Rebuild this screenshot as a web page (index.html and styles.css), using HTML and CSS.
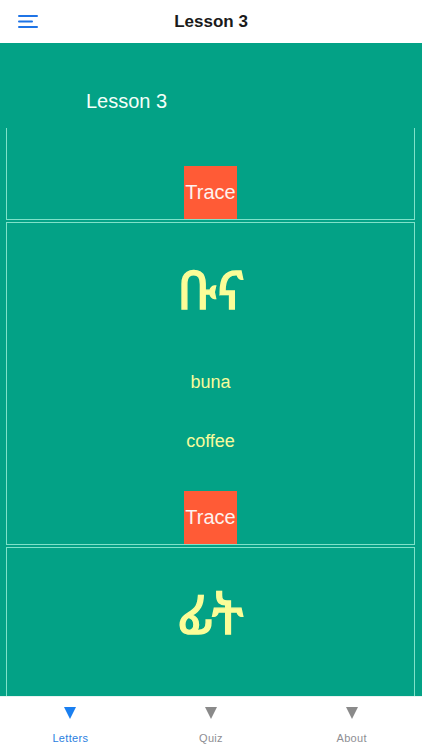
FILE: index.html
```html
<!DOCTYPE html>
<html lang="en">
<head>
<meta charset="utf-8">
<title>Lesson 3</title>
<link rel="stylesheet" href="styles.css">
</head>
<body>
<div class="app">
  <header class="topbar">
    <svg class="menu" width="20" height="13" viewBox="0 0 20 13" aria-hidden="true">
      <rect x="0" y="0" width="20" height="2" rx="1" fill="#1f74e6"/>
      <rect x="0" y="5.5" width="15" height="2" rx="1" fill="#1f74e6"/>
      <rect x="0" y="11" width="20" height="2" rx="1" fill="#1f74e6"/>
    </svg>
    <h1 class="title">Lesson 3</h1>
  </header>
  <main class="content">
    <div class="lesson-head">Lesson 3</div>
    <div class="viewport">
      <div class="list">
        <section class="card card-partial">
          <button class="trace">Trace</button>
        </section>
        <section class="card">
          <div class="word">ቡና</div>
          <div class="translit">buna</div>
          <div class="meaning">coffee</div>
          <button class="trace">Trace</button>
        </section>
        <section class="card">
          <div class="word">ፊት</div>
        </section>
      </div>
    </div>
  </main>
  <nav class="tabbar">
    <div class="tab active"><span class="tri"></span><span class="label">Letters</span></div>
    <div class="tab"><span class="tri"></span><span class="label">Quiz</span></div>
    <div class="tab"><span class="tri"></span><span class="label">About</span></div>
  </nav>
</div>
</body>
</html>
```
FILE: styles.css
```css
* { box-sizing: border-box; }
html, body { margin: 0; padding: 0; }
body {
  font-family: "Liberation Sans", Arial, sans-serif;
  background: #ffffff;
}
.app {
  width: 422px;
  height: 750px;
  display: flex;
  flex-direction: column;
  overflow: hidden;
}
.topbar {
  height: 43px;
  flex: none;
  display: flex;
  align-items: center;
  justify-content: center;
  position: relative;
  background: #ffffff;
}
.menu {
  position: absolute;
  left: 18px;
  top: 15px;
}
.title {
  margin: 0;
  font-size: 17px;
  font-weight: 700;
  color: #1a1a1a;
  line-height: 20px;
}
.content {
  flex: 1;
  display: flex;
  flex-direction: column;
  background: #03a286;
  min-height: 0;
}
.lesson-head {
  height: 85px;
  flex: none;
  padding: 47px 0 0 86px;
  font-size: 20px;
  line-height: 22px;
  color: #f4fff9;
}
.viewport {
  flex: 1;
  overflow: hidden;
  padding: 0 7px 0 6px;
  min-height: 0;
}
.list {
  display: flex;
  flex-direction: column;
  gap: 2px;
}
.card {
  height: 323px;
  flex: none;
  border: 1px solid #7fe2c9;
  display: flex;
  flex-direction: column;
  align-items: center;
  padding-top: 35px;
}
.card-partial {
  height: 92px;
  border-top: none;
  padding-top: 0;
}
.word {
  font-family: "Noto Sans Ethiopic", "Abyssinica SIL", "Noto Serif Ethiopic", "DejaVu Sans", sans-serif;
  font-size: 53px;
  font-weight: 400;
  -webkit-text-stroke: 1.3px #fbfd98;
  line-height: 62px;
  height: 62px;
  color: #fbfd98;
}
.translit {
  margin-top: 51px;
  font-size: 18px;
  line-height: 22px;
  color: #f6fb9c;
}
.meaning {
  margin-top: 37px;
  font-size: 18px;
  line-height: 22px;
  color: #f6fb9c;
}
.trace {
  margin-top: auto;
  height: 53px;
  padding: 0;
  border: none;
  background: #ff5b36;
  color: #fdf2ee;
  font-family: "Liberation Sans", Arial, sans-serif;
  font-size: 20px;
  line-height: 53px;
  width: 53px;
  display: flex;
  align-items: center;
  justify-content: center;
  white-space: nowrap;
}
.tabbar {
  height: 54px;
  flex: none;
  display: grid;
  grid-template-columns: 1fr 1fr 1fr;
  background: #ffffff;
  border-top: 1px solid #e6f4f0;
}
.tab {
  display: flex;
  flex-direction: column;
  align-items: center;
  padding-top: 10px;
}
.tri {
  width: 0;
  height: 0;
  border-left: 6.5px solid transparent;
  border-right: 6.5px solid transparent;
  border-top: 12px solid #8a8a8a;
}
.label {
  margin-top: 13px;
  font-size: 11px;
  line-height: 13px;
  color: #8e8e93;
  letter-spacing: 0.3px;
}
.tab.active .tri { border-top-color: #1a7ff0; }
.tab.active .label { color: #2a80e0; }
```
